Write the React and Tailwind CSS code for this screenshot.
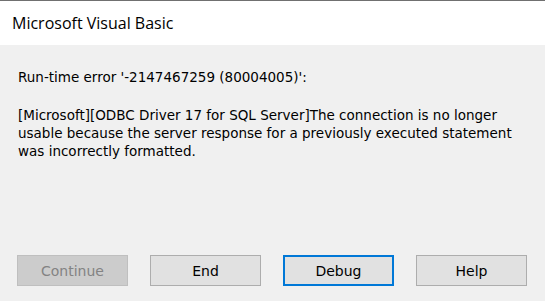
import React from 'react';

const buttons = [
  { label: 'Continue', disabled: true },
  { label: 'End' },
  { label: 'Debug', focused: true },
  { label: 'Help' },
];

const DialogButton = ({ label, disabled, focused }) => {
  let cls = 'border-[#adadad] bg-[#e1e1e1] text-black';
  if (disabled) cls = 'border-[#bfbfbf] bg-[#cccccc] text-[#838383]';
  if (focused) cls = 'border-2 border-[#0078d7] bg-[#e1e1e1] text-black';
  return (
    <button
      type="button"
      className={`w-[111px] h-[31px] border text-[14px] leading-none flex items-center justify-center ${cls}`}
    >
      {label}
    </button>
  );
};

export default function App() {
  return (
    <div
      className="w-[545px] h-[301px] flex flex-col border-t border-[#707070] bg-[#f0f0f0] overflow-hidden"
      style={{ fontFamily: '"DejaVu Sans", Verdana, sans-serif' }}
    >
      {/* Title bar */}
      <div
        className="h-[44px] bg-white flex items-center px-[12px] text-[16px] text-black"
        style={{ fontFamily: '"Open Sans", "Noto Sans", sans-serif' }}
      >
        Microsoft Visual Basic
      </div>

      {/* Message */}
      <div className="flex-1 px-[18px] pt-[23px] text-[13.5px] leading-[18px] text-black whitespace-nowrap">
        <p>Run-time error '-2147467259 (80004005)':</p>
        <p className="mt-[20px]">
          [Microsoft][ODBC Driver 17 for SQL Server]The connection is no longer
          <br />
          usable because the server response for a previously executed statement
          <br />
          was incorrectly formatted.
        </p>
      </div>

      {/* Buttons */}
      <div className="flex gap-[22px] pl-[17px] pb-[15px]">
        {buttons.map((b) => (
          <DialogButton key={b.label} {...b} />
        ))}
      </div>
    </div>
  );
}
